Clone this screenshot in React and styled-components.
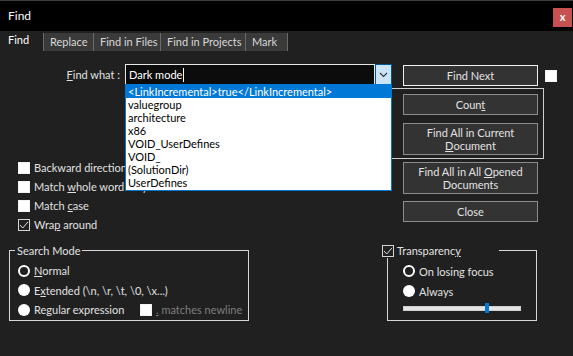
import React from 'react';
import styled, { createGlobalStyle, css } from 'styled-components';

const GlobalStyle = createGlobalStyle`
  html, body {
    margin: 0;
    padding: 0;
    background: #202020;
  }
  body {
    font-family: Lato, "Noto Sans", sans-serif;
    font-size: 11px;
    color: #e0e0e0;
  }
  * {
    box-sizing: border-box;
  }
`;

const Window = styled.div`
  width: 573px;
  height: 356px;
  background: #202020;
  border-top: 1px solid #3e3e3e;
  display: flex;
  flex-direction: column;
  overflow: hidden;
`;

const TitleBar = styled.div`
  height: 30px;
  flex: none;
  background: #000;
  display: flex;
  justify-content: space-between;
  align-items: flex-start;
  padding-left: 8px;
`;

const Title = styled.span`
  color: #fff;
  font-size: 12px;
  line-height: 30px;
`;

const CloseBtn = styled.div`
  width: 19px;
  height: 19px;
  margin: 7px 1px 0 0;
  background: #c75050;
  color: #fff;
  font-weight: 700;
  font-size: 11px;
  display: flex;
  align-items: center;
  justify-content: center;
  padding-bottom: 2px;
`;

const TabStrip = styled.div`
  height: 20px;
  flex: none;
  display: flex;
  align-items: flex-end;
`;

const Tab = styled.div`
  width: ${({ $w }) => $w}px;
  white-space: nowrap;
  ${({ $active }) =>
    $active
      ? css`
          height: 20px;
          line-height: 17px;
          padding-left: 8px;
          color: #fff;
        `
      : css`
          height: 18px;
          line-height: 18px;
          padding-left: 6px;
          background: #3a3a3a;
          border-left: 1px solid #6a6a6a;
          color: #d8d8d8;
        `}
  ${({ $last }) =>
    $last &&
    css`
      border-right: 1px solid #6a6a6a;
    `}
`;

const Body = styled.div`
  flex: 1;
  padding-top: 13px;
  display: flex;
  flex-direction: column;
`;

const TopRow = styled.div`
  height: 182px;
  display: flex;
`;

const LeftPane = styled.div`
  width: 392px;
  flex: none;
  display: flex;
  flex-direction: column;
`;

const FindRow = styled.div`
  height: 21px;
  display: flex;
  align-items: center;
  gap: 5px;
`;

const FieldLabel = styled.span`
  width: 120px;
  text-align: right;
  white-space: nowrap;
`;

const Combo = styled.div`
  position: relative;
  width: 267px;
  height: 21px;
  display: flex;
`;

const ComboInput = styled.div`
  flex: 1;
  border: 1px solid #e6e6e6;
  background: #0c0c0c;
  color: #fff;
  padding-left: 3px;
  display: flex;
  align-items: center;
`;

const Caret = styled.span`
  width: 1px;
  height: 14px;
  background: #fff;
  margin-left: 1px;
`;

const ComboButton = styled.div`
  width: 17px;
  flex: none;
  background: #cce4f7;
  border: 1px solid #005499;
  display: flex;
  align-items: center;
  justify-content: center;
`;

const DropList = styled.div`
  position: absolute;
  top: 20px;
  left: 0;
  width: 267px;
  border: 1px solid #0078d7;
  padding-bottom: 1px;
  background: #fff;
  z-index: 10;
`;

const DropItem = styled.div`
  height: 13px;
  line-height: 13px;
  padding-left: 2px;
  white-space: nowrap;
  color: ${({ $selected }) => ($selected ? '#fff' : '#000')};
  background: ${({ $selected }) => ($selected ? '#0078d7' : 'transparent')};
`;

const CheckList = styled.div`
  margin-top: 73px;
  display: flex;
  flex-direction: column;
`;

const OptionRow = styled.div`
  height: ${({ $h }) => $h || 19}px;
  display: flex;
  align-items: center;
  gap: 4px;
  padding-left: ${({ $pad }) => $pad || 0}px;
  white-space: nowrap;
  ${({ $w }) =>
    $w &&
    css`
      width: ${$w}px;
      flex: none;
    `}
  color: ${({ $dim }) => ($dim ? '#7f7f7f' : 'inherit')};
`;

const Box = styled.span`
  width: 12px;
  height: 12px;
  flex: none;
  display: flex;
  align-items: center;
  justify-content: center;
  background: ${({ $checked }) => ($checked ? '#202020' : '#fff')};
  border: 1px solid ${({ $checked }) => ($checked ? '#d4d4d4' : '#f2f2f2')};
`;

const Radio = styled.span`
  width: 12px;
  height: 12px;
  flex: none;
  border-radius: 50%;
  background: ${({ $on }) => ($on ? '#202020' : '#fff')};
  border: ${({ $on }) => ($on ? '2.5px solid #fff' : 'none')};
`;

const RightPane = styled.div`
  margin-left: 11px;
  display: flex;
  flex-direction: column;
  align-items: flex-start;
`;

const FindNextRow = styled.div`
  margin-top: 1px;
  display: flex;
  align-items: center;
  gap: 7px;
`;

const Button = styled.div`
  width: 135px;
  height: ${({ $h }) => $h}px;
  margin-top: ${({ $mt }) => $mt || 0}px;
  background: #333;
  border: 1px solid ${({ $default }) => ($default ? '#f0f0f0' : '#8c8c8c')};
  color: #e2e2e2;
  display: flex;
  align-items: center;
  justify-content: center;
  text-align: center;
  line-height: 13px;
`;

const SelectionGroup = styled.div`
  margin: 2px 0 0 -50px;
  width: 191px;
  border: 1px solid #cfcfcf;
  padding: 5px 5px 3px 49px;
  display: flex;
  flex-direction: column;
  gap: 8px;
`;

const BottomRow = styled.div`
  display: flex;
  align-items: flex-start;
`;

const GroupBox = styled.div`
  position: relative;
  margin: 4px 0 0 ${({ $ml }) => $ml}px;
  width: ${({ $w }) => $w}px;
  height: 71px;
  border: 1px solid #d6d6d6;
  padding: 10px 0 0 ${({ $pl }) => $pl}px;
`;

const Legend = styled.div`
  position: absolute;
  top: -7px;
  left: ${({ $left }) => $left}px;
  ${({ $w }) =>
    $w &&
    css`
      width: ${$w}px;
    `}
  height: 14px;
  line-height: 14px;
  padding: 0 2px;
  background: #202020;
  display: flex;
  align-items: center;
  gap: 3px;
  white-space: nowrap;
`;

const RegexRow = styled.div`
  display: flex;
  align-items: center;
`;

const Slider = styled.div`
  position: relative;
  width: 118px;
  height: 14px;
  display: flex;
  align-items: center;
`;

const Track = styled.div`
  width: 100%;
  height: 5px;
  background: #e4e4e4;
  border: 1px solid #d0d0d0;
`;

const Thumb = styled.div`
  position: absolute;
  left: 82px;
  top: 2px;
  width: 4px;
  height: 10px;
  background: #0078d7;
`;

const Check = ({ checked }) => (
  <Box $checked={checked}>
    {checked && (
      <svg width="10" height="10" viewBox="0 0 10 10">
        <path d="M1 5 L3.8 8 L9 1.8" fill="none" stroke="#dcdcdc" strokeWidth="1" />
      </svg>
    )}
  </Box>
);

const history = [
  '<LinkIncremental>true</LinkIncremental>',
  'valuegroup',
  'architecture',
  'x86',
  'VOID_UserDefines',
  'VOID_',
  '(SolutionDir)',
  'UserDefines',
];

const tabs = [
  { label: 'Find', w: 43, active: true },
  { label: 'Replace', w: 50 },
  { label: 'Find in Files', w: 67 },
  { label: 'Find in Projects', w: 85 },
  { label: 'Mark', w: 43, last: true },
];

export default function App() {
  return (
    <>
      <GlobalStyle />
      <Window>
        <TitleBar>
          <Title>Find</Title>
          <CloseBtn>x</CloseBtn>
        </TitleBar>
        <TabStrip>
          {tabs.map((t) => (
            <Tab key={t.label} $w={t.w} $active={t.active} $last={t.last}>
              {t.label}
            </Tab>
          ))}
        </TabStrip>
        <Body>
          <TopRow>
            <LeftPane>
              <FindRow>
                <FieldLabel>
                  <u>F</u>ind what :
                </FieldLabel>
                <Combo>
                  <ComboInput>
                    Dark mode
                    <Caret />
                  </ComboInput>
                  <ComboButton>
                    <svg width="9" height="6" viewBox="0 0 9 6">
                      <path d="M1 1 L4.5 4.5 L8 1" fill="none" stroke="#333" strokeWidth="1.1" />
                    </svg>
                  </ComboButton>
                  <DropList>
                    {history.map((h, i) => (
                      <DropItem key={h} $selected={i === 0}>
                        {h}
                      </DropItem>
                    ))}
                  </DropList>
                </Combo>
              </FindRow>
              <CheckList>
                <OptionRow $pad={18}>
                  <Check />
                  Backward direction
                </OptionRow>
                <OptionRow $pad={18}>
                  <Check />
                  <span>
                    Match <u>w</u>hole word only
                  </span>
                </OptionRow>
                <OptionRow $pad={18}>
                  <Check />
                  <span>
                    Match <u>c</u>ase
                  </span>
                </OptionRow>
                <OptionRow $pad={18}>
                  <Check checked />
                  <span>
                    Wra<u>p</u> around
                  </span>
                </OptionRow>
              </CheckList>
            </LeftPane>
            <RightPane>
              <FindNextRow>
                <Button $h={21} $default>
                  Find Next
                </Button>
                <Check />
              </FindNextRow>
              <SelectionGroup>
                <Button $h={21}>
                  <span>
                    Coun<u>t</u>
                  </span>
                </Button>
                <Button $h={32}>
                  <span>
                    Find All in Current
                    <br />
                    <u>D</u>ocument
                  </span>
                </Button>
              </SelectionGroup>
              <Button $h={32} $mt={3}>
                <span>
                  Find All in All <u>O</u>pened
                  <br />
                  Documents
                </span>
              </Button>
              <Button $h={21} $mt={7}>
                Close
              </Button>
            </RightPane>
          </TopRow>
          <BottomRow>
            <GroupBox $ml={9} $w={240} $pl={8}>
              <Legend $left={5}>Search Mode</Legend>
              <OptionRow $h={19.5}>
                <Radio $on />
                <span>
                  <u>N</u>ormal
                </span>
              </OptionRow>
              <OptionRow $h={19.5}>
                <Radio />
                <span>
                  E<u>x</u>tended (\n, \r, \t, \0, \x...)
                </span>
              </OptionRow>
              <RegexRow>
                <OptionRow $h={19.5} $w={122}>
                  <Radio />
                  <span>
                    Re<u>g</u>ular expression
                  </span>
                </OptionRow>
                <OptionRow $h={19.5} $dim>
                  <Check />
                  <span>
                    <u>.</u> matches newline
                  </span>
                </OptionRow>
              </RegexRow>
            </GroupBox>
            <GroupBox $ml={138} $w={150} $pl={15}>
              <Legend $left={-8} $w={119}>
                <Check checked />
                <span>
                  Transparenc<u>y</u>
                </span>
              </Legend>
              <OptionRow $h={20}>
                <Radio $on />
                On losing focus
              </OptionRow>
              <OptionRow $h={20}>
                <Radio />
                Always
              </OptionRow>
              <Slider>
                <Track />
                <Thumb />
              </Slider>
            </GroupBox>
          </BottomRow>
        </Body>
      </Window>
    </>
  );
}
